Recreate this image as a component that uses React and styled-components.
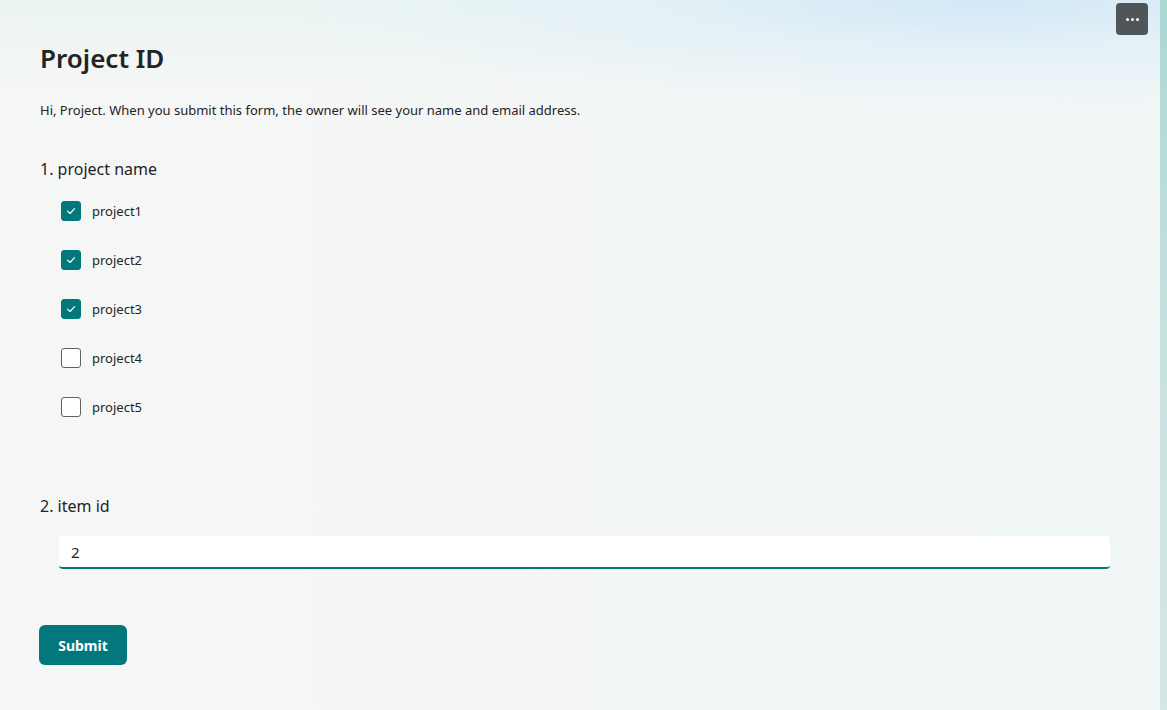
import React, { useState } from 'react';
import styled, { createGlobalStyle } from 'styled-components';

const GlobalStyle = createGlobalStyle`
    html, body {
        margin: 0;
        padding: 0;
        height: 100%;
    }
    body {
        font-family: "Noto Sans", "Open Sans", Arial, sans-serif;
        color: #242424;
    }
    #root {
        height: 100%;
    }
`;

const teal = '#03787c';

const Page = styled.div`
    display: flex;
    width: 100%;
    height: 710px;
    overflow: hidden;
`;

const Card = styled.div`
    position: relative;
    flex: 1;
    padding: 40px 50px 0 40px;
    box-sizing: border-box;
    background:
        radial-gradient(ellipse 700px 110px at 85% 0%, rgba(210, 231, 248, 0.95) 0%, rgba(222, 238, 248, 0.6) 45%, rgba(240, 246, 248, 0) 100%),
        linear-gradient(180deg, rgba(233, 244, 242, 0.9) 0px, rgba(242, 246, 246, 0) 90px),
        linear-gradient(90deg, #f6f6f6 0%, #f4f6f6 50%, #f1f6f6 100%);
`;

const SideStrip = styled.div`
    width: 7px;
    background: linear-gradient(180deg, #a9d8d2 0%, #c8e2e0 50%, #d4e6e5 100%);
`;

const MoreButton = styled.button`
    position: absolute;
    top: 3px;
    right: 12px;
    width: 32px;
    height: 32px;
    border: none;
    border-radius: 4px;
    background: #505559;
    display: flex;
    align-items: center;
    justify-content: center;
    gap: 2px;
    padding: 0;
    cursor: pointer;
`;

const Dot = styled.span`
    width: 3px;
    height: 3px;
    border-radius: 50%;
    background: #fff;
`;

const Title = styled.h1`
    margin: 0;
    font-size: 26px;
    line-height: 36px;
    font-weight: 600;
    color: #242424;
`;

const Intro = styled.p`
    margin: 25px 0 0;
    font-size: 13px;
    line-height: 18px;
    color: #242424;
`;

const Question = styled.div`
    margin-top: ${p => p.$top}px;
    font-size: 16px;
    line-height: 22px;
    color: #242424;
`;

const OptionList = styled.div`
    display: flex;
    flex-direction: column;
    margin-top: 6px;
    padding-left: 21px;
`;

const OptionRow = styled.label`
    display: flex;
    align-items: center;
    gap: 11px;
    height: 49px;
    cursor: pointer;
    font-size: 13px;
    color: #242424;
`;

const Box = styled.span`
    width: 20px;
    height: 20px;
    box-sizing: border-box;
    border-radius: 3px;
    border: 1px solid ${p => (p.$checked ? teal : '#616161')};
    background: ${p => (p.$checked ? teal : '#ffffff')};
    display: flex;
    align-items: center;
    justify-content: center;
`;

const TextInput = styled.input`
    display: block;
    margin: 19px 0 0 19px;
    width: calc(100% - 19px);
    height: 33px;
    box-sizing: border-box;
    border: none;
    border-bottom: 2px solid ${teal};
    border-radius: 4px;
    background: #ffffff;
    padding: 0 12px;
    font-family: inherit;
    font-size: 15px;
    color: #242424;
    outline: none;
`;

const SubmitButton = styled.button`
    margin: 56px 0 0 -1px;
    width: 88px;
    height: 40px;
    border: none;
    border-radius: 6px;
    background: ${teal};
    color: #ffffff;
    font-family: inherit;
    font-size: 14px;
    font-weight: 700;
    cursor: pointer;
`;

const Check = () => (
    <svg width="10" height="10" viewBox="0 0 10 10">
        <path d="M1.5 5.2 L4 7.5 L8.6 2.6" fill="none" stroke="#fff" strokeWidth="1.1" strokeLinecap="round" strokeLinejoin="round" />
    </svg>
);

const projects = ['project1', 'project2', 'project3', 'project4', 'project5'];

const App = () => {
    const [checked, setChecked] = useState([true, true, true, false, false]);
    const [itemId, setItemId] = useState('2');

    const toggle = i => setChecked(c => c.map((v, j) => (j === i ? !v : v)));

    return (
        <Page>
            <GlobalStyle />
            <Card>
                <MoreButton aria-label="More options">
                    <Dot />
                    <Dot />
                    <Dot />
                </MoreButton>
                <Title>Project ID</Title>
                <Intro>Hi, Project. When you submit this form, the owner will see your name and email address.</Intro>
                <Question $top={39}>1. project name</Question>
                <OptionList>
                    {projects.map((p, i) => (
                        <OptionRow key={p} onClick={() => toggle(i)}>
                            <Box $checked={checked[i]}>{checked[i] && <Check />}</Box>
                            {p}
                        </OptionRow>
                    ))}
                </OptionList>
                <Question $top={64}>2. item id</Question>
                <TextInput value={itemId} onChange={e => setItemId(e.target.value)} />
                <SubmitButton>Submit</SubmitButton>
            </Card>
            <SideStrip />
        </Page>
    );
};

export default App;
